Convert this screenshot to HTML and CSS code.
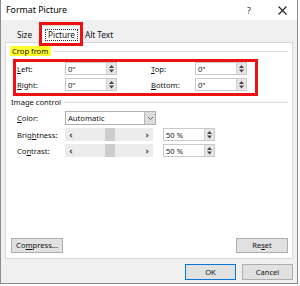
FILE: index.html
```html
<!DOCTYPE html>
<html>
<head>
<meta charset="utf-8">
<link rel="stylesheet" href="styles.css">
</head>
<body>
<div class="window">
  <div class="titlebar">
    <span class="title">Format Picture</span>
    <span class="help">?</span>
    <span class="close"><svg width="9" height="9" viewBox="0 0 9 9"><path d="M0.5 0.5 L8.5 8.5 M8.5 0.5 L0.5 8.5" stroke="#222" stroke-width="1.1" fill="none"/></svg></span>
  </div>
  <div class="client">
    <div class="tabs">
      <div class="tab">Size</div>
      <div class="tab active"><span class="focus">Picture</span></div>
      <div class="tab tab-alt">Alt Text</div>
    </div>
    <div class="annot-tab"></div>
    <div class="panel">
      <div class="section-head crop-head"><span class="hl">Crop from</span><span class="rule"></span></div>
      <div class="crop">
        <div class="crop-row">
          <span class="lbl"><u>L</u>eft:</span>
          <div class="spin"><span class="val">0"</span><span class="arrows"><svg width="9" height="11" viewBox="0 0 9 11"><path d="M4.5 2 L7 5 L2 5 Z M2 6.5 L7 6.5 L4.5 9.5 Z" fill="#444"/></svg></span></div>
          <span class="lbl lbl-top"><u>T</u>op:</span>
          <div class="spin"><span class="val">0"</span><span class="arrows"><svg width="9" height="11" viewBox="0 0 9 11"><path d="M4.5 2 L7 5 L2 5 Z M2 6.5 L7 6.5 L4.5 9.5 Z" fill="#444"/></svg></span></div>
        </div>
        <div class="crop-row">
          <span class="lbl"><u>R</u>ight:</span>
          <div class="spin"><span class="val">0"</span><span class="arrows"><svg width="9" height="11" viewBox="0 0 9 11"><path d="M4.5 2 L7 5 L2 5 Z M2 6.5 L7 6.5 L4.5 9.5 Z" fill="#444"/></svg></span></div>
          <span class="lbl lbl-top"><u>B</u>ottom:</span>
          <div class="spin"><span class="val">0"</span><span class="arrows"><svg width="9" height="11" viewBox="0 0 9 11"><path d="M4.5 2 L7 5 L2 5 Z M2 6.5 L7 6.5 L4.5 9.5 Z" fill="#444"/></svg></span></div>
        </div>
      </div>
      <div class="section-head img-head"><span class="htext">Image control</span><span class="rule"></span></div>
      <div class="ctl-row row-color">
        <span class="lbl2"><u>C</u>olor:</span>
        <div class="dropdown"><span class="val">Automatic</span><span class="drop-btn"><svg width="7" height="5" viewBox="0 0 7 5"><path d="M1 1 L3.5 3.5 L6 1" stroke="#666" stroke-width="1" fill="none"/></svg></span></div>
      </div>
      <div class="ctl-row">
        <span class="lbl2">Brig<u>h</u>tness:</span>
        <div class="slider"><span class="chev">&lsaquo;</span><span class="thumb"></span><span class="chev">&rsaquo;</span></div>
        <div class="spin pct"><span class="val">50 %</span><span class="arrows"><svg width="9" height="11" viewBox="0 0 9 11"><path d="M4.5 2 L7 5 L2 5 Z M2 6.5 L7 6.5 L4.5 9.5 Z" fill="#444"/></svg></span></div>
      </div>
      <div class="ctl-row">
        <span class="lbl2">Co<u>n</u>trast:</span>
        <div class="slider"><span class="chev">&lsaquo;</span><span class="thumb"></span><span class="chev">&rsaquo;</span></div>
        <div class="spin pct"><span class="val">50 %</span><span class="arrows"><svg width="9" height="11" viewBox="0 0 9 11"><path d="M4.5 2 L7 5 L2 5 Z M2 6.5 L7 6.5 L4.5 9.5 Z" fill="#444"/></svg></span></div>
      </div>
      <div class="panel-buttons">
        <button class="btn">Co<u>m</u>press...</button>
        <button class="btn">Re<u>s</u>et</button>
      </div>
    </div>
    <div class="footer">
      <button class="btn btn-ok">OK</button>
      <button class="btn">Cancel</button>
    </div>
  </div>
</div>
</body>
</html>
```

FILE: styles.css
```css
html, body {
  margin: 0;
  padding: 0;
  background: #ffffff;
}
body {
  font-family: "Noto Sans", "Open Sans", sans-serif;
  font-size: 7.6px;
  color: #111;
}
.window {
  position: relative;
  width: 296px;
  height: 283px;
  border: 1px solid #8c8c8c;
  border-top: none;
  background: #f0f0f0;
  display: flex;
  flex-direction: column;
}
.titlebar {
  height: 20px;
  background: #ffffff;
  display: flex;
  align-items: center;
  flex: none;
}
.title {
  flex: 1;
  padding-left: 5px;
  font-size: 8.8px;
  color: #000;
}
.help {
  width: 12px;
  font-size: 9px;
  color: #333;
  margin-right: 19px;
}
.close {
  width: 9px;
  height: 9px;
  margin-right: 10px;
  display: flex;
}
.client {
  flex: 1;
  display: flex;
  flex-direction: column;
}
.tabs {
  height: 22px;
  display: flex;
  align-items: flex-end;
  padding-left: 10px;
  flex: none;
  font-size: 8.2px;
}
.tab {
  height: 14px;
  line-height: 14px;
  padding: 0 6px;
  color: #111;
}
.tab-alt {
  padding-left: 3px;
}
.tab.active {
  height: 17px;
  line-height: 17px;
  margin-bottom: -1px;
  padding: 0 3px;
  background: #ffffff;
  border: 1px solid #d9d9d9;
  border-bottom: none;
  position: relative;
  z-index: 1;
  margin-left: 3px;
  margin-right: 0;
}
.focus {
  border: 1px dotted #333;
  padding: 0 2px;
  line-height: 10px;
  display: inline-block;
}
.annot-tab {
  position: absolute;
  left: 38px;
  top: 22px;
  width: 38px;
  height: 18px;
  border: 3px solid #ee1111;
  z-index: 2;
}
.panel {
  margin: 0 4px;
  height: 217px;
  box-sizing: border-box;
  background: #ffffff;
  border: 1px solid #d9d9d9;
  display: flex;
  flex-direction: column;
  flex: none;
}
.section-head {
  display: flex;
  align-items: center;
  height: 10px;
  margin-right: 4px;
}
.crop-head {
  margin-top: 3px;
  margin-left: 4px;
}
.hl {
  background: #ffff2e;
  padding: 0 3px 0 2px;
  line-height: 10px;
}
.rule {
  flex: 1;
  height: 1px;
  background: #dcdcdc;
  margin-left: 2px;
}
.crop {
  margin: 3px 0 0 7px;
  width: 238px;
  height: 31px;
  border: 3px solid #ee1111;
  padding: 0 0 0 1px;
  display: flex;
  flex-direction: column;
  gap: 3px;
}
.crop-row {
  display: flex;
  align-items: center;
  height: 13px;
}
.lbl {
  width: 48px;
}
.lbl-top {
  margin-left: 34px;
  width: 44px;
}
.spin {
  width: 52px;
  height: 13px;
  box-sizing: border-box;
  border: 1px solid #c9c9c9;
  display: flex;
  align-items: center;
  background: #fff;
}
.spin .val {
  flex: 1;
  padding-left: 2px;
  color: #222;
}
.arrows {
  width: 9px;
  height: 11px;
  background: #e6e6e6;
  border-left: 1px solid #d0d0d0;
  display: flex;
}
.img-head {
  margin-top: 1px;
  margin-left: 5px;
}
.htext {
  line-height: 10px;
}
.ctl-row {
  display: flex;
  align-items: center;
  height: 13px;
  margin-top: 3px;
  padding-left: 11px;
}
.row-color {
  margin-top: 4px;
  height: 14px;
}
.lbl2 {
  width: 48px;
}
.dropdown {
  width: 91px;
  height: 14px;
  box-sizing: border-box;
  border: 1px solid #b0b0b0;
  display: flex;
  align-items: center;
}
.dropdown .val {
  flex: 1;
  padding-left: 2px;
  color: #111;
}
.drop-btn {
  width: 10px;
  height: 12px;
  background: #dcdcdc;
  border-left: 1px solid #b8b8b8;
  display: flex;
  align-items: center;
  justify-content: center;
}
.slider {
  width: 88px;
  height: 13px;
  background: #ececec;
  display: flex;
  align-items: center;
  position: relative;
}
.chev {
  font-size: 9px;
  line-height: 13px;
  color: #444;
  width: 12px;
  text-align: center;
  font-weight: bold;
}
.thumb {
  width: 11px;
  height: 13px;
  background: #cdcdcd;
  margin-left: 28px;
  margin-right: 26px;
}
.pct {
  margin-left: 10px;
}
.panel-buttons {
  margin-top: auto;
  padding: 0 4px 5px 5px;
  display: flex;
  justify-content: space-between;
}
.btn {
  font-family: "Noto Sans", "Open Sans", sans-serif;
  font-size: 7.6px;
  color: #111;
  width: 52px;
  height: 15px;
  padding: 0;
  background: #e1e1e1;
  border: 1px solid #adadad;
  line-height: 13px;
}
.footer {
  display: flex;
  justify-content: flex-end;
  gap: 6px;
  padding: 5px 4px 0 0;
}
.footer .btn {
  width: 51px;
  height: 16px;
}
.btn-ok {
  border-color: #0a78d7;
}
```
